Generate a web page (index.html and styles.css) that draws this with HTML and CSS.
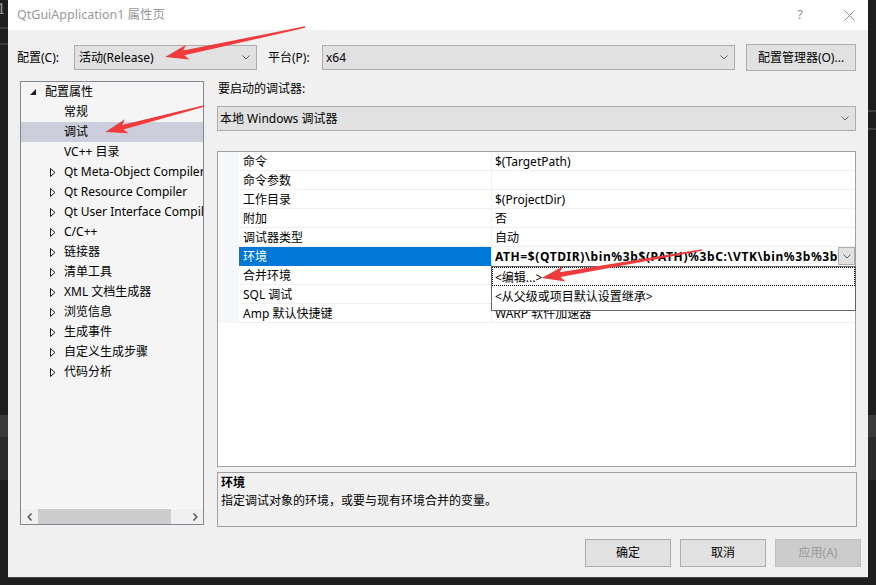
FILE: index.html
```html
<!DOCTYPE html>
<html lang="zh-CN">
<head>
<meta charset="utf-8">
<title>QtGuiApplication1 属性页</title>
<link rel="stylesheet" href="styles.css">
</head>
<body>
<div class="screen">
  <div class="edge edge-left"><span class="bg-char">1</span></div>
  <div class="middle">
    <div class="window">
      <div class="titlebar">
        <span class="title">QtGuiApplication1 属性页</span>
        <div class="title-controls">
          <span class="help">?</span>
          <svg class="close" width="11" height="11" viewBox="0 0 11 11"><path d="M0.5 0.5L10.5 10.5M10.5 0.5L0.5 10.5" stroke="#8c8c8c" stroke-width="1" fill="none"/></svg>
        </div>
      </div>
      <div class="body">
        <div class="config-row">
          <span class="lbl lbl-config">配置(C):</span>
          <div class="combo combo-config"><span>活动(Release)</span><svg class="chev" width="8" height="5" viewBox="0 0 8 5"><polyline points="0.5,0.5 4,4 7.5,0.5" fill="none" stroke="#606060"/></svg></div>
          <span class="lbl lbl-platform">平台(P):</span>
          <div class="combo combo-platform"><span>x64</span><svg class="chev" width="8" height="5" viewBox="0 0 8 5"><polyline points="0.5,0.5 4,4 7.5,0.5" fill="none" stroke="#606060"/></svg></div>
          <div class="btn btn-manager">配置管理器(O)...</div>
        </div>
        <div class="main">
          <div class="tree">
            <div class="tree-list">
              <div class="node lvl1"><span class="tw"><svg width="6" height="6" viewBox="0 0 6 6"><polygon points="6,0 6,6 0,6" fill="#1e1e1e"/></svg></span><span>配置属性</span></div>
              <div class="node lvl2"><span class="tw"></span><span>常规</span></div>
              <div class="node lvl2 selected"><span class="tw"></span><span>调试</span></div>
              <div class="node lvl2"><span class="tw"></span><span>VC++ 目录</span></div>
              <div class="node lvl2"><span class="tw"><svg class="tri" width="6" height="9" viewBox="0 0 6 9"><polygon points="0.5,0.5 5,4.5 0.5,8.5" fill="none" stroke="#1e1e1e"/></svg></span><span>Qt Meta-Object Compiler</span></div>
              <div class="node lvl2"><span class="tw"><svg class="tri" width="6" height="9" viewBox="0 0 6 9"><polygon points="0.5,0.5 5,4.5 0.5,8.5" fill="none" stroke="#1e1e1e"/></svg></span><span>Qt Resource Compiler</span></div>
              <div class="node lvl2"><span class="tw"><svg class="tri" width="6" height="9" viewBox="0 0 6 9"><polygon points="0.5,0.5 5,4.5 0.5,8.5" fill="none" stroke="#1e1e1e"/></svg></span><span>Qt User Interface Compiler</span></div>
              <div class="node lvl2"><span class="tw"><svg class="tri" width="6" height="9" viewBox="0 0 6 9"><polygon points="0.5,0.5 5,4.5 0.5,8.5" fill="none" stroke="#1e1e1e"/></svg></span><span>C/C++</span></div>
              <div class="node lvl2"><span class="tw"><svg class="tri" width="6" height="9" viewBox="0 0 6 9"><polygon points="0.5,0.5 5,4.5 0.5,8.5" fill="none" stroke="#1e1e1e"/></svg></span><span>链接器</span></div>
              <div class="node lvl2"><span class="tw"><svg class="tri" width="6" height="9" viewBox="0 0 6 9"><polygon points="0.5,0.5 5,4.5 0.5,8.5" fill="none" stroke="#1e1e1e"/></svg></span><span>清单工具</span></div>
              <div class="node lvl2"><span class="tw"><svg class="tri" width="6" height="9" viewBox="0 0 6 9"><polygon points="0.5,0.5 5,4.5 0.5,8.5" fill="none" stroke="#1e1e1e"/></svg></span><span>XML 文档生成器</span></div>
              <div class="node lvl2"><span class="tw"><svg class="tri" width="6" height="9" viewBox="0 0 6 9"><polygon points="0.5,0.5 5,4.5 0.5,8.5" fill="none" stroke="#1e1e1e"/></svg></span><span>浏览信息</span></div>
              <div class="node lvl2"><span class="tw"><svg class="tri" width="6" height="9" viewBox="0 0 6 9"><polygon points="0.5,0.5 5,4.5 0.5,8.5" fill="none" stroke="#1e1e1e"/></svg></span><span>生成事件</span></div>
              <div class="node lvl2"><span class="tw"><svg class="tri" width="6" height="9" viewBox="0 0 6 9"><polygon points="0.5,0.5 5,4.5 0.5,8.5" fill="none" stroke="#1e1e1e"/></svg></span><span>自定义生成步骤</span></div>
              <div class="node lvl2"><span class="tw"><svg class="tri" width="6" height="9" viewBox="0 0 6 9"><polygon points="0.5,0.5 5,4.5 0.5,8.5" fill="none" stroke="#1e1e1e"/></svg></span><span>代码分析</span></div>
            </div>
            <div class="hscroll">
              <span class="sarrow"><svg width="6" height="8" viewBox="0 0 6 8"><polyline points="4.5,0.5 1.2,4 4.5,7.5" fill="none" stroke="#606060" stroke-width="1.6"/></svg></span>
              <span class="thumb"></span>
              <span class="sarrow sarrow-right"><svg width="6" height="8" viewBox="0 0 6 8"><polyline points="1.5,0.5 4.8,4 1.5,7.5" fill="none" stroke="#606060" stroke-width="1.6"/></svg></span>
            </div>
          </div>
          <div class="right">
            <div class="debugger-label">要启动的调试器:</div>
            <div class="combo combo-debugger"><span>本地 Windows 调试器</span><svg class="chev" width="8" height="5" viewBox="0 0 8 5"><polyline points="0.5,0.5 4,4 7.5,0.5" fill="none" stroke="#606060"/></svg></div>
            <div class="grid">
              <div class="row"><span class="gutter"></span><span class="name">命令</span><span class="value">$(TargetPath)</span></div>
              <div class="row"><span class="gutter"></span><span class="name">命令参数</span><span class="value"></span></div>
              <div class="row"><span class="gutter"></span><span class="name">工作目录</span><span class="value">$(ProjectDir)</span></div>
              <div class="row"><span class="gutter"></span><span class="name">附加</span><span class="value">否</span></div>
              <div class="row"><span class="gutter"></span><span class="name">调试器类型</span><span class="value">自动</span></div>
              <div class="row row-sel"><span class="gutter"></span><span class="name">环境</span><span class="value value-edit"><span class="edit-text">ATH=$(QTDIR)\bin%3b$(PATH)%3bC:\VTK\bin%3b%3b</span><span class="drop-btn"><svg width="8" height="5" viewBox="0 0 8 5"><polyline points="0.5,0.5 4,4 7.5,0.5" fill="none" stroke="#606060"/></svg></span></span></div>
              <div class="row"><span class="gutter"></span><span class="name">合并环境</span><span class="value"></span></div>
              <div class="row"><span class="gutter"></span><span class="name">SQL 调试</span><span class="value"></span></div>
              <div class="row"><span class="gutter"></span><span class="name">Amp 默认快捷键</span><span class="value">WARP 软件加速器</span></div>
              <div class="popup">
                <div class="popup-item focused">&lt;编辑...&gt;</div>
                <div class="popup-item">&lt;从父级或项目默认设置继承&gt;</div>
              </div>
            </div>
            <div class="desc">
              <div class="desc-title">环境</div>
              <div class="desc-text">指定调试对象的环境，或要与现有环境合并的变量。</div>
            </div>
          </div>
        </div>
        <div class="buttons">
          <div class="btn btn-dlg">确定</div>
          <div class="btn btn-dlg">取消</div>
          <div class="btn btn-dlg disabled">应用(A)</div>
        </div>
      </div>
    </div>
    <div class="edge-bottom"></div>
  </div>
  <div class="edge edge-right"></div>
</div>
<svg class="annotations" width="876" height="585" viewBox="0 0 876 585">
  <polygon points="0,-0.7 124,-2.4 120,-7.5 143,0 120,7.5 124,2.4 0,0.7" fill="#ef3b3b" transform="translate(305 27) rotate(167.91)"/>
  <polygon points="0,-0.7 84,-2.3 80,-7.2 102,0 80,7.2 84,2.3 0,0.7" fill="#ef3b3b" transform="translate(204 106) rotate(165.29)"/>
  <polygon points="0,-0.7 144,-2.4 140,-7.5 163,0 140,7.5 144,2.4 0,0.7" fill="#ef3b3b" transform="translate(702 250) rotate(170.13)"/>
</svg>
</body>
</html>
```
FILE: styles.css
```css
* { box-sizing: border-box; }
html, body { margin: 0; padding: 0; }
body {
  width: 876px;
  height: 585px;
  overflow: hidden;
  position: relative;
  background: #1e1e1e;
  font-family: "Noto Sans", "Noto Sans CJK SC", sans-serif;
  font-size: 12px;
  color: #000;
}
.screen { display: flex; width: 876px; height: 585px; }
.edge { width: 8px; flex: none; position: relative; overflow: hidden; }
.edge-left {
  background: linear-gradient(to bottom, #1e1e1e 0 27px, #3c3c3c 27px 29px, #1e1e1e 29px 43px, #3c3c3c 43px 45px, #1e1e1e 45px 415px, #3a3a3b 415px 437px, #2a2a2b 437px 480px, #1f1f1f 480px);
}
.edge-right {
  background: linear-gradient(to bottom, #1e1e1e 0 110px, #3c3c3c 110px 112px, #1e1e1e 112px 128px, #3c3c3c 128px 130px, #1e1e1e 130px 415px, #3a3a3b 415px 437px, #2a2a2b 437px 480px, #1f1f1f 480px);
}
.bg-char { position: absolute; left: -3px; top: 1px; color: #9a9a9a; font-family: "DejaVu Serif", serif; font-size: 14px; line-height: 16px; }
.middle { width: 860px; flex: none; display: flex; flex-direction: column; }
.window { height: 577px; flex: none; background: #f0f0f0; display: flex; flex-direction: column; }
.edge-bottom { flex: 1; background: #1f1f1f; border-top: 1px solid #454545; }

.titlebar { height: 30px; flex: none; background: #fff; display: flex; align-items: center; padding-left: 9px; padding-right: 13px; }
.title { color: #999; font-size: 12.5px; line-height: 16px; }
.title-controls { margin-left: auto; display: flex; align-items: center; gap: 38px; }
.help { width: 12px; text-align: center; color: #8c8c8c; font-size: 12px; line-height: 14px; }
.close { display: block; }

.body { flex: 1; display: flex; flex-direction: column; }
.config-row { margin-top: 14px; height: 27px; display: flex; align-items: center; padding-left: 9px; }
.lbl { line-height: 16px; flex: none; }
.lbl-config { width: 57px; }
.lbl-platform { width: 54px; margin-left: 11px; }
.combo { height: 25px; background: #e1e1e1; border: 1px solid #adadad; display: flex; align-items: center; padding-left: 4px; flex: none; line-height: 16px; }
.combo .chev { margin-left: auto; margin-right: 6px; display: block; }
.combo-config { width: 183px; }
.combo-platform { width: 413px; padding-left: 3px; }
.btn { background: #e1e1e1; border: 1px solid #adadad; display: flex; align-items: center; justify-content: center; flex: none; line-height: 16px; }
.btn-manager { width: 110px; height: 27px; margin-left: 11px; }

.main { margin-top: 10px; height: 446px; flex: none; display: flex; padding-left: 12px; gap: 13px; }
.tree { width: 184px; height: 444px; border: 1px solid #828790; background: #f5f5f5; display: flex; flex-direction: column; }
.tree-list { flex: 1; overflow: hidden; }
.node { height: 20px; display: flex; align-items: center; white-space: nowrap; line-height: 20px; }
.lvl1 { padding-left: 9px; }
.lvl2 { padding-left: 28px; }
.tw { width: 15px; flex: none; display: flex; align-items: center; }
.tw .tri { margin-left: 1px; }
.tw svg { display: block; }
.node.selected { background: #cccedb; }
.hscroll { height: 16px; flex: none; display: flex; align-items: flex-start; background: #f0f0f0; border-top: 1px solid #fafafa; }
.sarrow { width: 17px; height: 15px; display: flex; align-items: center; justify-content: center; flex: none; }
.sarrow svg { display: block; }
.thumb { width: 133px; height: 15px; background: #cdcdcd; flex: none; }
.sarrow-right { margin-left: auto; }

.right { width: 640px; flex: none; display: flex; flex-direction: column; }
.debugger-label { height: 25px; padding-left: 1px; line-height: 15px; flex: none; }
.combo-debugger { width: 639px; padding-left: 2px; }
.grid { margin-top: 20px; width: 639px; height: 316px; flex: none; border: 1px solid #a0a0a0; background: #fff; position: relative; }
.row { height: 19px; display: flex; }
.gutter { width: 21px; flex: none; background: #f5f7fb; }
.name { width: 253px; flex: none; padding-left: 4px; padding-top: 2px; line-height: 16px; border-bottom: 1px solid #f0f0f0; border-right: 1px solid #f0f0f0; white-space: nowrap; overflow: hidden; }
.value { flex: 1; min-width: 0; padding-left: 3px; padding-top: 2px; line-height: 16px; border-bottom: 1px solid #f0f0f0; white-space: nowrap; overflow: hidden; }
.row-sel .name { background: #0078d7; color: #fff; border-bottom-color: #0078d7; }
.value-edit { display: flex; padding-top: 0; border-bottom-color: #fff; }
.edit-text { flex: 1; min-width: 0; overflow: hidden; font-weight: bold; white-space: nowrap; letter-spacing: 0.6px; padding-top: 2px; }
.drop-btn { width: 17px; height: 18px; flex: none; background: #e1e1e1; border: 1px solid #adadad; display: flex; align-items: center; justify-content: center; }
.drop-btn svg { display: block; }
.popup { position: absolute; left: 273px; top: 114px; width: 365px; height: 45px; border: 1px solid #646464; background: #fff; }
.popup-item { height: 19px; line-height: 17px; padding-top: 2px; padding-left: 3px; white-space: nowrap; }
.popup-item.focused { outline: 1px dotted #000; outline-offset: -1px; }
.desc { margin-top: 5px; width: 640px; height: 55px; flex: none; border: 1px solid #a0a0a0; background: #f0f0f0; padding: 1px 3px 0; }
.desc-title { font-weight: bold; line-height: 18px; }
.desc-text { line-height: 18px; }

.buttons { margin-top: 12px; height: 28px; flex: none; display: flex; justify-content: flex-end; gap: 9px; padding-right: 7px; }
.btn-dlg { width: 86px; height: 28px; }
.btn-dlg.disabled { background: #cccccc; border-color: #bfbfbf; color: #999; }

.annotations { position: absolute; left: 0; top: 0; pointer-events: none; }
```
